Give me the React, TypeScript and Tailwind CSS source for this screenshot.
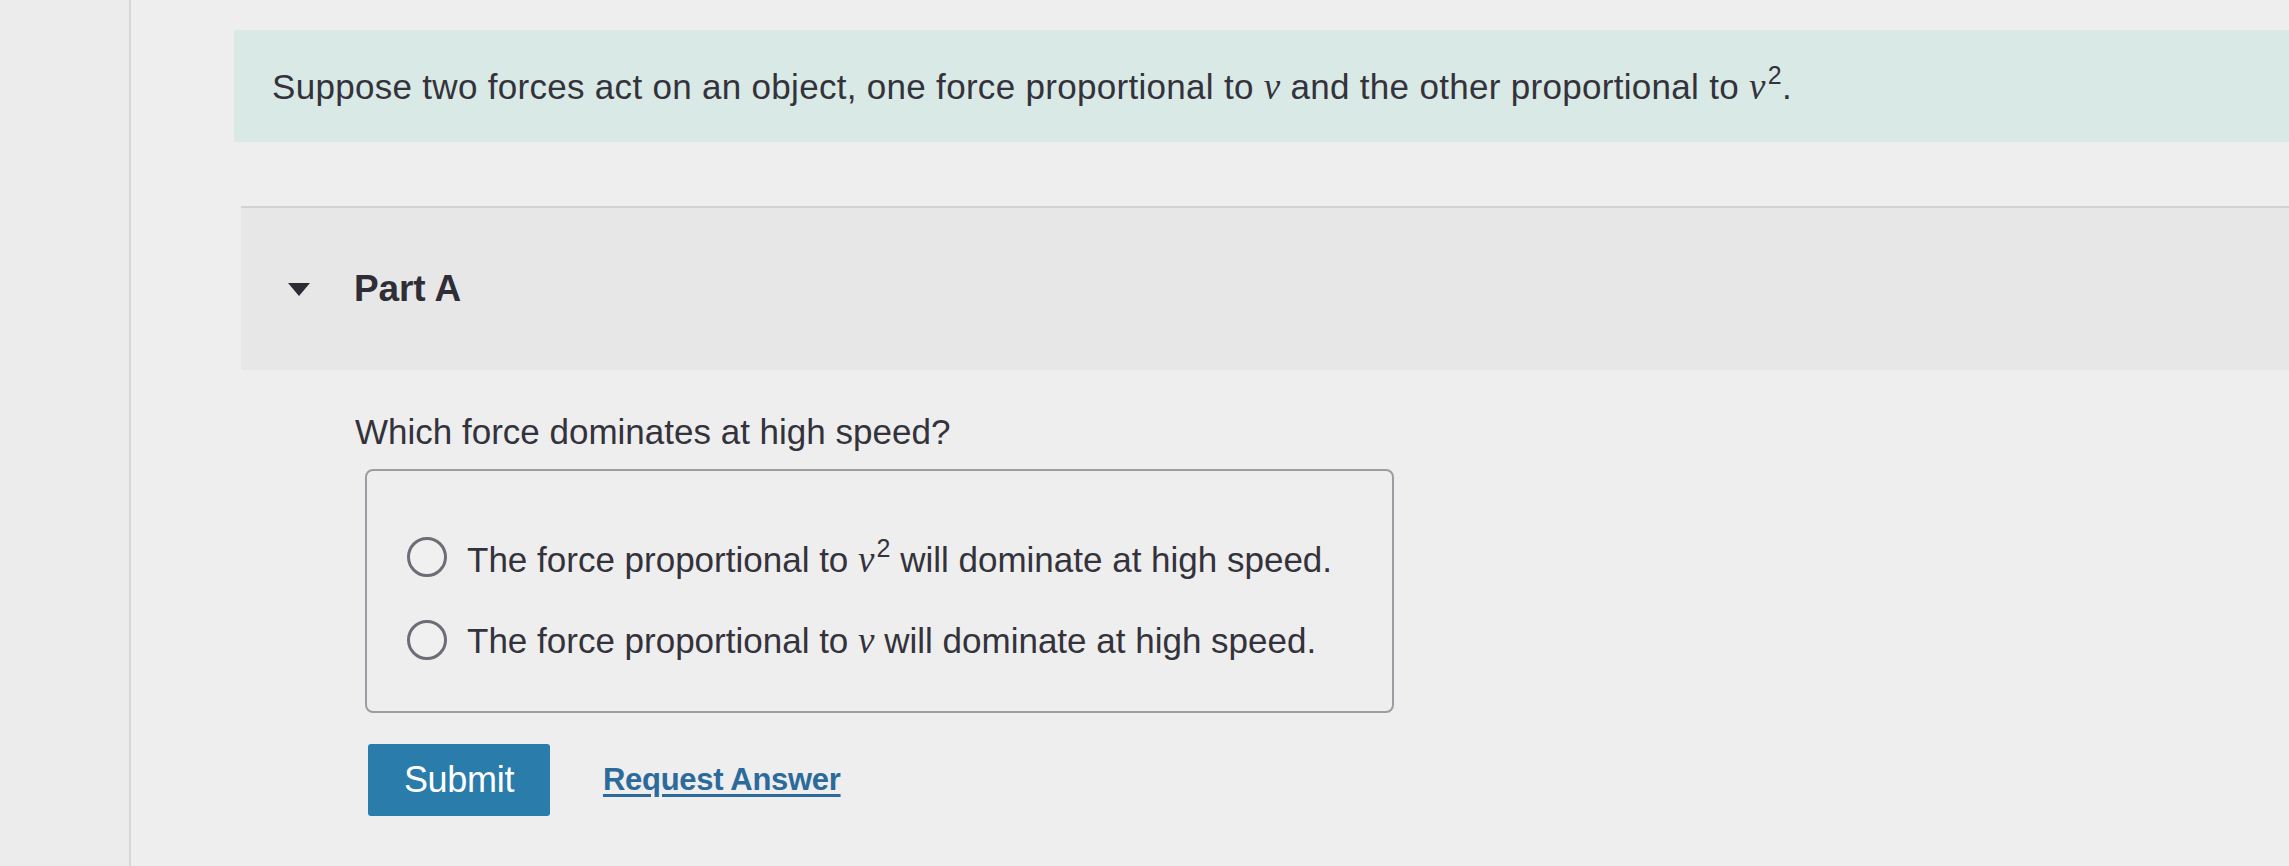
import React from "react";

const V = () => (
  <span className="italic text-[37px]" style={{ fontFamily: '"Liberation Serif", serif' }}>v</span>
);

const Sq = () => <span className="text-[25px] align-[15px] ml-[2px]">2</span>;

export default function App() {
  return (
    <div
      className="w-full h-[866px] flex overflow-hidden bg-[#ebebeb] text-[#34323b]"
      style={{ fontFamily: '"Liberation Sans", Arial, sans-serif' }}
    >
      <div className="w-[131px] shrink-0 bg-[#ececec] border-r-2 border-[#d6d6d6]" />
      <div className="flex-1 bg-[#eeeeee] pt-[30px] flex flex-col">
        <div className="ml-[103px] h-[112px] bg-[#d9e9e6] flex items-center pl-[38px] text-[35px] tracking-[0.3px]">
          <span>
            Suppose two forces act on an object, one force proportional to <V /> and the other proportional to{" "}
            <V />
            <Sq />.
          </span>
        </div>

        <div className="mt-[64px] ml-[110px] h-[164px] bg-[#e7e7e7] border-t-2 border-[#d2d2d2] flex items-center">
          <svg width="22" height="14" viewBox="0 0 22 14" className="ml-[47px] mt-[2px]">
            <polygon points="0,0 22,0 11,13" fill="#2d2b33" />
          </svg>
          <span className="ml-[44px] text-[37px] font-bold tracking-[-0.1px] text-[#2f2d36]">Part A</span>
        </div>

        <div className="ml-[224px] mt-[44px] text-[35px] leading-none">
          Which force dominates at high speed?
        </div>

        <div className="ml-[234px] mt-[20px] w-[1029px] h-[244px] border-2 border-[#9e9ca3] rounded-[8px] flex flex-col gap-[43px] pl-[40px] pt-[66px]">
          <label className="flex items-center gap-[20px] text-[35px] leading-none h-[40px]">
            <span className="w-[40px] h-[40px] rounded-full border-[3px] border-[#6f6c75] bg-[#f0f0f0] shrink-0" />
            <span>
              The force proportional to <V />
              <Sq /> will dominate at high speed.
            </span>
          </label>
          <label className="flex items-center gap-[20px] text-[35px] leading-none h-[40px]">
            <span className="w-[40px] h-[40px] rounded-full border-[3px] border-[#6f6c75] bg-[#f0f0f0] shrink-0" />
            <span>
              The force proportional to <V /> will dominate at high speed.
            </span>
          </label>
        </div>

        <div className="ml-[237px] mt-[31px] flex items-center">
          <button className="w-[182px] h-[72px] bg-[#2a7cab] rounded-[3px] text-white text-[36px] tracking-[-0.3px] flex items-center justify-center">
            Submit
          </button>
          <a className="ml-[53px] text-[31px] font-bold text-[#2c6a9c] underline underline-offset-[4px] tracking-[-0.3px]">
            Request Answer
          </a>
        </div>
      </div>
    </div>
  );
}
